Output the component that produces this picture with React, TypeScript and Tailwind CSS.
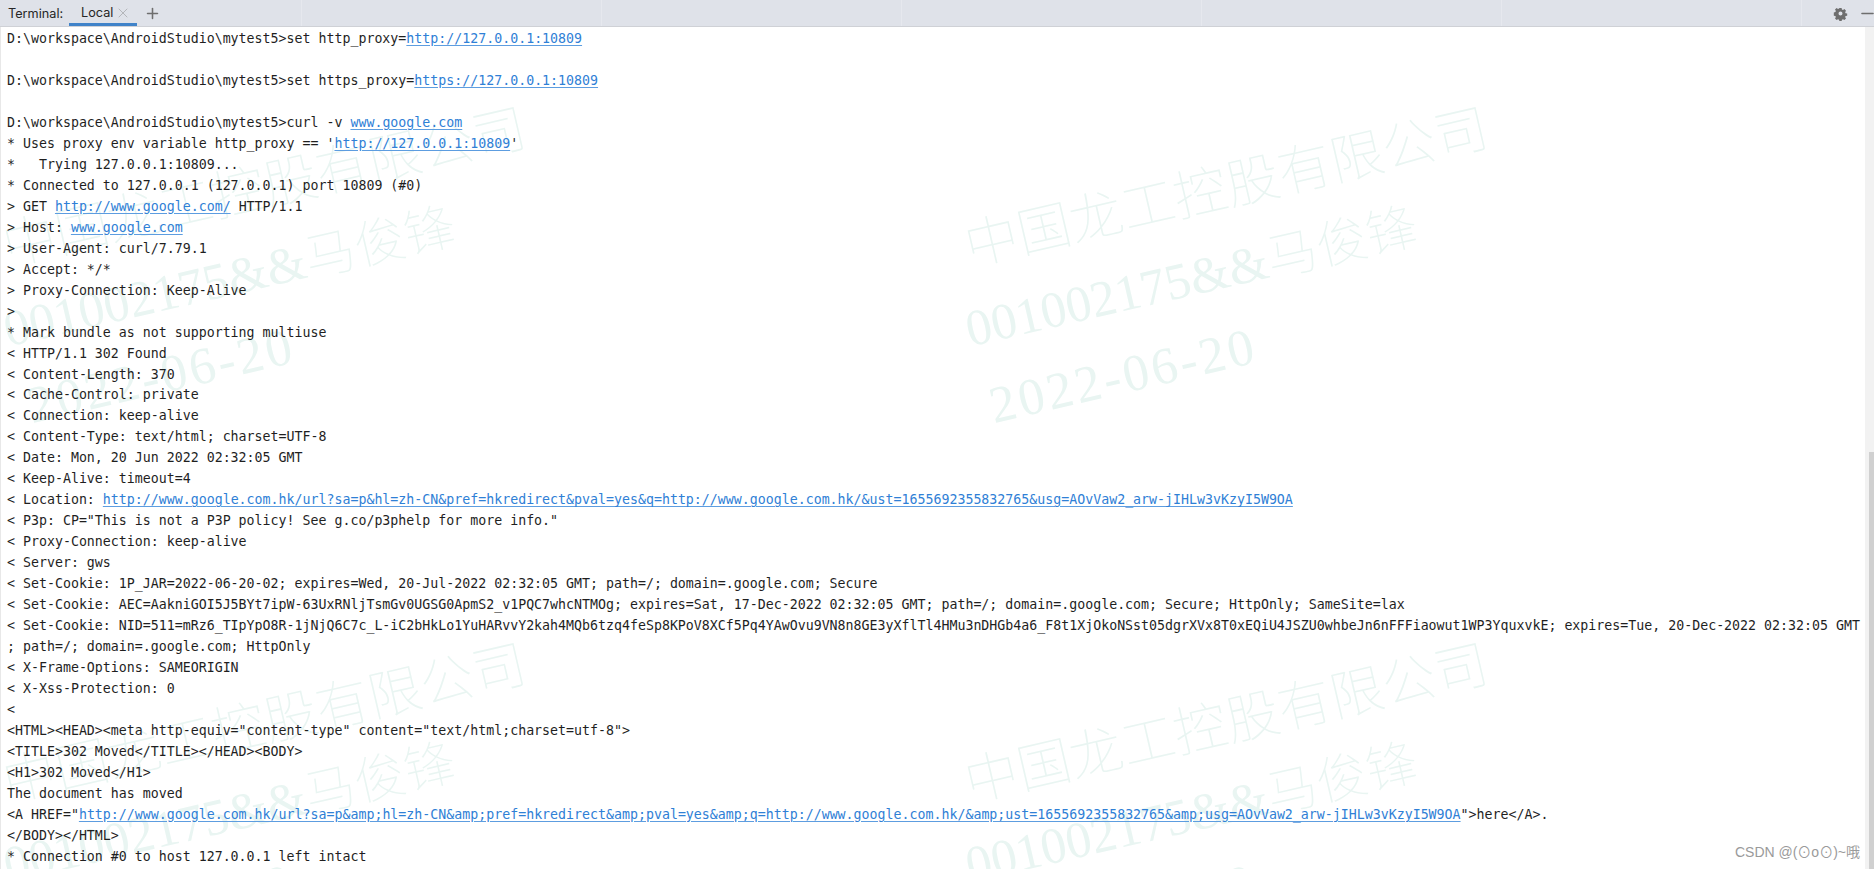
import { Minus, Plus, X } from 'lucide-react';

type Part = string | { link: string };

const lines: Part[][] = [
  ['D:\\workspace\\AndroidStudio\\mytest5>set http_proxy=', { link: 'http://127.0.0.1:10809' }],
  [''],
  ['D:\\workspace\\AndroidStudio\\mytest5>set https_proxy=', { link: 'https://127.0.0.1:10809' }],
  [''],
  ['D:\\workspace\\AndroidStudio\\mytest5>curl -v ', { link: 'www.google.com' }],
  ["* Uses proxy env variable http_proxy == '", { link: 'http://127.0.0.1:10809' }, "'"],
  ['*   Trying 127.0.0.1:10809...'],
  ['* Connected to 127.0.0.1 (127.0.0.1) port 10809 (#0)'],
  ['> GET ', { link: 'http://www.google.com/' }, ' HTTP/1.1'],
  ['> Host: ', { link: 'www.google.com' }],
  ['> User-Agent: curl/7.79.1'],
  ['> Accept: */*'],
  ['> Proxy-Connection: Keep-Alive'],
  ['>'],
  ['* Mark bundle as not supporting multiuse'],
  ['< HTTP/1.1 302 Found'],
  ['< Content-Length: 370'],
  ['< Cache-Control: private'],
  ['< Connection: keep-alive'],
  ['< Content-Type: text/html; charset=UTF-8'],
  ['< Date: Mon, 20 Jun 2022 02:32:05 GMT'],
  ['< Keep-Alive: timeout=4'],
  ['< Location: ', { link: 'http://www.google.com.hk/url?sa=p&hl=zh-CN&pref=hkredirect&pval=yes&q=http://www.google.com.hk/&ust=1655692355832765&usg=AOvVaw2_arw-jIHLw3vKzyI5W9OA' }],
  ['< P3p: CP="This is not a P3P policy! See g.co/p3phelp for more info."'],
  ['< Proxy-Connection: keep-alive'],
  ['< Server: gws'],
  ['< Set-Cookie: 1P_JAR=2022-06-20-02; expires=Wed, 20-Jul-2022 02:32:05 GMT; path=/; domain=.google.com; Secure'],
  ['< Set-Cookie: AEC=AakniGOI5J5BYt7ipW-63UxRNljTsmGv0UGSG0ApmS2_v1PQC7whcNTMOg; expires=Sat, 17-Dec-2022 02:32:05 GMT; path=/; domain=.google.com; Secure; HttpOnly; SameSite=lax'],
  ['< Set-Cookie: NID=511=mRz6_TIpYpO8R-1jNjQ6C7c_L-iC2bHkLo1YuHARvvY2kah4MQb6tzq4feSp8KPoV8XCf5Pq4YAwOvu9VN8n8GE3yXflTl4HMu3nDHGb4a6_F8t1XjOkoNSst05dgrXVx8T0xEQiU4JSZU0whbeJn6nFFFiaowut1WP3YquxvkE; expires=Tue, 20-Dec-2022 02:32:05 GMT'],
  ['; path=/; domain=.google.com; HttpOnly'],
  ['< X-Frame-Options: SAMEORIGIN'],
  ['< X-Xss-Protection: 0'],
  ['<'],
  ['<HTML><HEAD><meta http-equiv="content-type" content="text/html;charset=utf-8">'],
  ['<TITLE>302 Moved</TITLE></HEAD><BODY>'],
  ['<H1>302 Moved</H1>'],
  ['The document has moved'],
  ['<A HREF="', { link: 'http://www.google.com.hk/url?sa=p&amp;hl=zh-CN&amp;pref=hkredirect&amp;pval=yes&amp;q=http://www.google.com.hk/&amp;ust=1655692355832765&amp;usg=AOvVaw2_arw-jIHLw3vKzyI5W9OA' }, '">here</A>.'],
  ['</BODY></HTML>'],
  ['* Connection #0 to host 127.0.0.1 left intact'],
];

const Watermark = ({ className }: { className: string }) => (
  <div className={`absolute w-[560px] -rotate-[13deg] origin-top-left font-['Liberation_Serif','Noto_Sans_CJK_SC',serif] font-thin text-[#e9f5f2] select-none ${className}`}>
    <div className="text-[53.5px] leading-[80px] whitespace-nowrap">中国龙工控股有限公司</div>
    <div className="text-[51px] leading-[80px] whitespace-nowrap -ml-[18px]">001002175&amp;&amp;马俊锋</div>
    <div className="text-[52px] leading-[80px] whitespace-nowrap -ml-[12px] tracking-[3px]">2022-06-20</div>
  </div>
);

// gear of the tool window header
const Gear = () => (
  <svg viewBox="0 0 16 16" className="w-[15px] h-[15px]">
    <path
      fill="#6e6e6e"
      fillRule="evenodd"
      d="M6.6 1h2.8l.4 2 1.3.6 1.8-1.1 2 2-1.1 1.8.6 1.3 2 .4v2.8l-2 .4-.6 1.3 1.1 1.8-2 2-1.8-1.1-1.3.6-.4 2H6.6l-.4-2-1.3-.6-1.8 1.1-2-2 1.1-1.8-.6-1.3-2-.4V6.6l2-.4.6-1.3-1.1-1.8 2-2 1.8 1.1 1.3-.6zM8 5.5a2.5 2.5 0 1 0 0 5 2.5 2.5 0 0 0 0-5z"
      transform="translate(1.2 1.2) scale(0.85)"
    />
  </svg>
);

export default function App() {
  return (
    <div className="w-[1874px] h-[869px] overflow-hidden flex flex-col bg-white relative">
      {/* Tool window header */}
      <div className="h-[27px] shrink-0 flex items-center relative bg-[#dfe2e9] border-b border-[#cfd1d6] font-['Inter',sans-serif] text-[12.7px] text-[#262626]">
        {[301, 601, 901, 1201, 1501, 1801].map((x) => (
          <div key={x} className="absolute top-0 bottom-0 w-px bg-[#e6e8ee]" style={{ left: x }} />
        ))}
        <span className="relative ml-2 w-[61px] pt-[1px]">Terminal:</span>
        <div className="relative h-full w-[68px] flex items-center pl-[12px] gap-[2px] border-b-[3px] border-[#4083c9]">
          <span className="pt-[3px]">Local</span>
          <X className="w-[16px] h-[16px] mt-[3px] text-[#b4b6ba]" strokeWidth={1.5} />
        </div>
        <Plus className="relative ml-[7px] w-[17px] h-[17px] text-[#6e6e6e]" strokeWidth={2.2} />
        <div className="relative ml-auto flex items-center gap-[10px]">
          <Gear />
          <Minus className="w-[19px] h-[19px] -mr-[3px] text-[#6e6e6e]" strokeWidth={2} />
        </div>
      </div>

      {/* Terminal body */}
      <div className="flex-1 flex min-h-0 relative">
        <div className="flex-1 relative overflow-hidden border-l border-[#e8e8e8] pl-[6px] pt-[2px]">
          <Watermark className="left-[-6px] top-[182px]" />
          <Watermark className="left-[956px] top-[182px]" />
          <Watermark className="left-[-6px] top-[718px]" />
          <Watermark className="left-[956px] top-[718px]" />
          <div className="relative font-['DejaVu_Sans_Mono',monospace] text-[13.28px] leading-[20.97px] text-[#1f1f1f]">
            {lines.map((parts, i) => (
              <div key={i} className="h-[20.97px] whitespace-pre">
                {parts.map((p, j) =>
                  typeof p === 'string' ? (
                    <span key={j}>{p}</span>
                  ) : (
                    <span key={j} className="text-[#2f80d6] underline underline-offset-2 decoration-[#5d9de0]">{p.link}</span>
                  )
                )}
              </div>
            ))}
          </div>
        </div>
        {/* Scrollbar */}
        <div className="w-[9px] shrink-0 bg-[#f2f2f2] flex flex-col justify-end items-end">
          <div className="h-[417px] w-[5px] bg-[#d0d0d0]" />
        </div>
      </div>

      <div className="absolute right-[14px] bottom-[6px] font-['Liberation_Sans','Noto_Sans_CJK_SC',sans-serif] text-[14px] text-[#9a9a9a]">CSDN @(⊙o⊙)~哦</div>
    </div>
  );
}
